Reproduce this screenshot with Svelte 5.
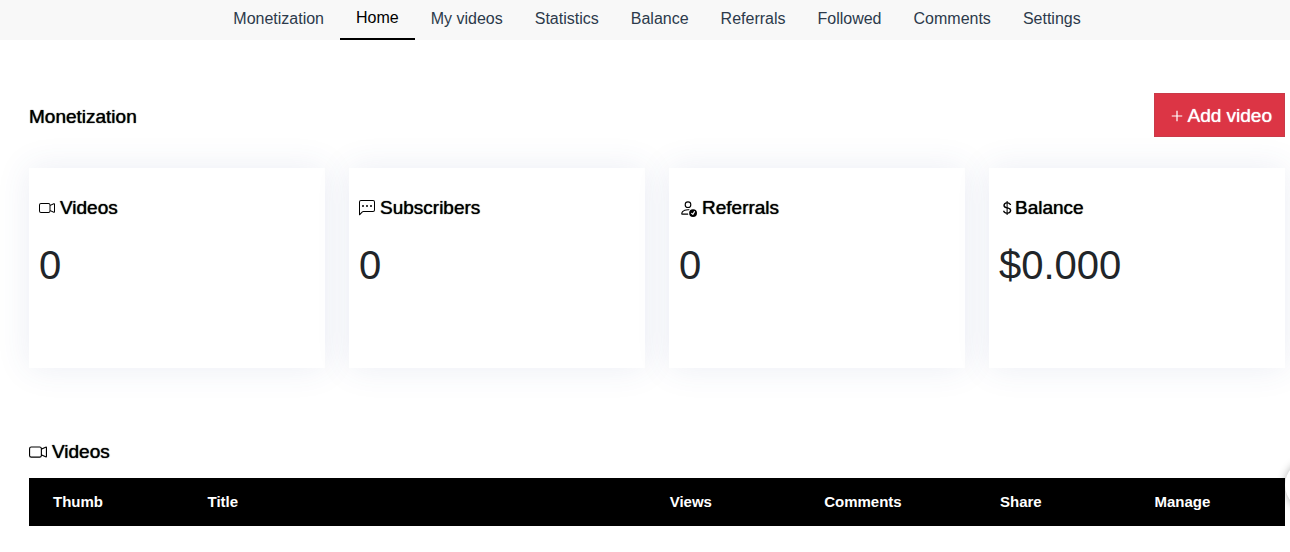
<script>
  let active = $state('Home');

  const links = [
    'Monetization',
    'Home',
    'My videos',
    'Statistics',
    'Balance',
    'Referrals',
    'Followed',
    'Comments',
    'Settings',
  ];

  const stats = [
    { label: 'Videos', value: '0', icon: 'camera' },
    { label: 'Subscribers', value: '0', icon: 'chat' },
    { label: 'Referrals', value: '0', icon: 'person' },
    { label: 'Balance', value: '$0.000', icon: 'dollar' },
  ];

  const columns = ['Thumb', 'Title', 'Views', 'Comments', 'Share', 'Manage'];
</script>

{#snippet icon(name)}
  <svg class="icon icon-{name}" viewBox="0 0 16 16" fill="currentColor" aria-hidden="true">
    {#if name === 'camera' || name === 'camera-lg'}
      <path fill-rule="evenodd" d="M0 5a2 2 0 0 1 2-2h7.5a2 2 0 0 1 1.983 1.738l3.11-1.382A1 1 0 0 1 16 4.269v7.462a1 1 0 0 1-1.406.913l-3.111-1.382A2 2 0 0 1 9.5 13H2a2 2 0 0 1-2-2zm11.5 5.175 3.5 1.556V4.269l-3.5 1.556zM2 4a1 1 0 0 0-1 1v6a1 1 0 0 0 1 1h7.5a1 1 0 0 0 1-1V5a1 1 0 0 0-1-1z" />
    {:else if name === 'chat'}
      <path d="M14 1a1 1 0 0 1 1 1v8a1 1 0 0 1-1 1H4.414A2 2 0 0 0 3 11.586l-2 2V2a1 1 0 0 1 1-1zM2 0a2 2 0 0 0-2 2v12.793a.5.5 0 0 0 .854.353l2.853-2.853A1 1 0 0 1 4.414 12H14a2 2 0 0 0 2-2V2a2 2 0 0 0-2-2z" />
      <path d="M5 6a1 1 0 1 1-2 0 1 1 0 0 1 2 0m4 0a1 1 0 1 1-2 0 1 1 0 0 1 2 0m4 0a1 1 0 1 1-2 0 1 1 0 0 1 2 0" />
    {:else if name === 'person'}
      <path d="M12.5 16a3.5 3.5 0 1 0 0-7 3.5 3.5 0 0 0 0 7m1.679-4.493-1.335 2.226a.75.75 0 0 1-1.174.144l-.774-.773a.5.5 0 0 1 .708-.708l.547.548 1.17-1.951a.5.5 0 1 1 .858.514M11 5a3 3 0 1 1-6 0 3 3 0 0 1 6 0M8 7a2 2 0 1 0 0-4 2 2 0 0 0 0 4" />
      <path d="M8.256 14a4.5 4.5 0 0 1-.229-1.004H3c.001-.246.154-.986.832-1.664C4.484 10.68 5.711 10 8 10q.39 0 .74.025c.226-.341.496-.65.804-.918Q8.844 9.002 8 9c-5 0-6 3-6 4s1 1 1 1z" />
    {:else if name === 'dollar'}
      <path d="M4 10.781c.148 1.667 1.513 2.85 3.591 3.003V15h1.043v-1.216c2.27-.179 3.678-1.438 3.678-3.3 0-1.59-.947-2.51-2.956-3.028l-.722-.187V3.467c1.122.11 1.879.714 2.07 1.616h1.47c-.166-1.6-1.54-2.748-3.54-2.875V1H7.591v1.233c-1.939.23-3.27 1.472-3.27 3.156 0 1.454.966 2.483 2.661 2.917l.61.162v4.031c-1.149-.17-1.94-.8-2.131-1.718zm3.391-3.836c-1.043-.263-1.6-.825-1.6-1.616 0-.944.704-1.641 1.8-1.828v3.495l-.2-.05zm1.591 1.872c1.287.323 1.852.859 1.852 1.769 0 1.097-.826 1.828-2.2 1.939V8.73z" />
    {:else if name === 'plus'}
      <path d="M7.3 2h1.4v5.3H14v1.4H8.7V14H7.3V8.7H2V7.3h5.3z" />
    {/if}
  </svg>
{/snippet}

<nav class="subnav">
  <ul>
    {#each links as link}
      <li>
        <a href="#{link}" class:active={active === link} onclick={() => (active = link)}>{link}</a>
      </li>
    {/each}
  </ul>
</nav>

<main class="page">
  <header class="page-head">
    <h1 class="title">Monetization</h1>
    <button class="btn-add title">{@render icon('plus')}Add video</button>
  </header>

  <section class="stats">
    {#each stats as stat}
      <div class="card">
        <h2 class="title">{@render icon(stat.icon)}{stat.label}</h2>
        <p class="value">{stat.value}</p>
      </div>
    {/each}
  </section>

  <section class="videos">
    <h2 class="title">{@render icon('camera-lg')}Videos</h2>
    <table>
      <thead>
        <tr>
          {#each columns as column}
            <th scope="col" class="col-{column.toLowerCase()}">{column}</th>
          {/each}
        </tr>
      </thead>
    </table>
  </section>
</main>

<button class="float-btn" aria-label="Open menu"></button>

<style>
  :global(body) {
    background: #fff;
    color: #212529;
    font-family: 'Liberation Sans', Arial, sans-serif;
    overflow-x: hidden;
  }

  .subnav {
    padding: 0 5px 0 29px;
    background: #f8f8f8;
  }

  .subnav ul {
    display: flex;
    justify-content: center;
    margin: 0;
    padding: 0;
    list-style: none;
  }

  .subnav a {
    display: block;
    box-sizing: border-box;
    height: 40px;
    padding: 0 16px;
    color: #2c3a4b;
    font-size: 16px;
    line-height: 38px;
    text-decoration: none;
  }

  .subnav a.active {
    border-bottom: 2px solid #000;
    color: #000;
    line-height: 36px;
  }

  .page {
    padding: 53px 5px 24px 29px;
  }

  .page-head {
    display: flex;
    justify-content: space-between;
    align-items: center;
    margin-bottom: 31px;
  }

  .page-head h1 {
    padding-top: 4px;
  }

  .title {
    display: flex;
    align-items: center;
    gap: 5px;
    margin: 0;
    color: #000;
    font-family: inherit;
    font-size: 19px;
    font-weight: 500;
    line-height: 24px;
    text-shadow: 0 0 1px currentColor;
  }

  .btn-add {
    gap: 3px;
    padding: 10px 12px 8px 15px;
    background: #dc3545;
    border: 1px solid #c93a49;
    color: #fff;
    cursor: pointer;
  }

  .stats {
    display: grid;
    grid-template-columns: repeat(4, 1fr);
    gap: 24px;
    margin-bottom: 72px;
  }

  .card {
    box-sizing: border-box;
    min-height: 200px;
    padding: 28px 10px;
    background: #fff;
    box-shadow: 0 0 32px rgba(60, 76, 150, 0.1);
  }

  .value {
    margin: 21px 0 0;
    font-size: 40px;
    line-height: 48px;
  }

  .icon {
    flex: none;
    width: 16px;
    height: 16px;
  }

  .icon-person,
  .icon-camera-lg {
    width: 18px;
    height: 18px;
  }

  .icon-dollar {
    margin-right: -5px;
  }

  .icon-plus {
    width: 14px;
    height: 14px;
  }

  .videos .title {
    margin-bottom: 14px;
  }

  table {
    width: 100%;
    table-layout: fixed;
    border-collapse: collapse;
    background: #000;
    color: #fff;
  }

  th {
    box-sizing: border-box;
    height: 48px;
    padding: 0 24px 2px;
    font-size: 15px;
    text-align: left;
  }

  .col-thumb,
  .col-views,
  .col-share,
  .col-manage {
    width: 12.3%;
  }

  .col-title {
    width: 36.8%;
  }

  .col-comments {
    width: 14%;
  }

  .float-btn {
    position: fixed;
    right: -45px;
    bottom: 42px;
    width: 50px;
    height: 50px;
    padding: 0;
    background: #fff;
    border: 0;
    border-radius: 50%;
    box-shadow: 0 0 8px rgba(0, 0, 0, 0.3);
  }
</style>
